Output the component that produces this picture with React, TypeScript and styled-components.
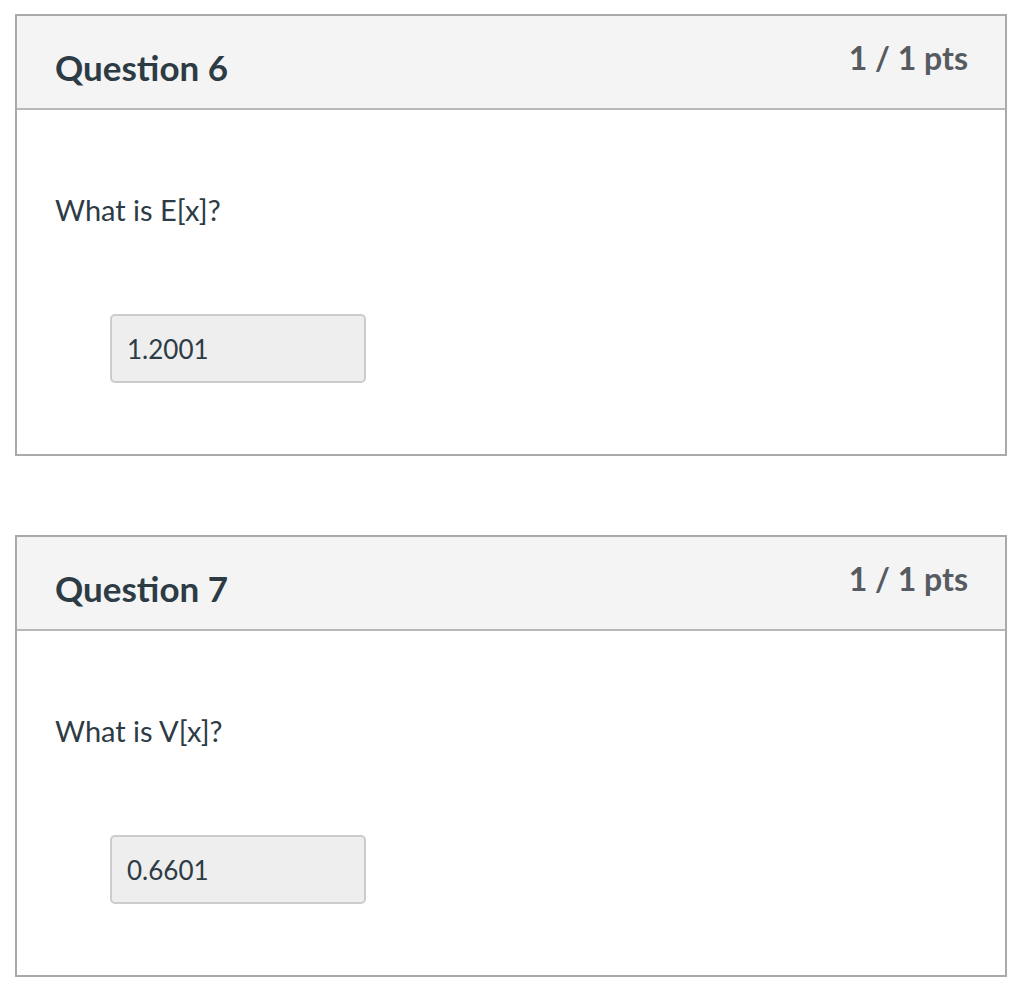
import styled, {createGlobalStyle} from "styled-components";

const GlobalStyle = createGlobalStyle`
    body {
        margin: 0;
        background: #ffffff;
        font-family: Lato, "Noto Sans", sans-serif;
    }
`

type QuestionPropsType = {
    title: string,
    points: string,
    prompt: string,
    answer: string,
}

const questions: QuestionPropsType[] = [
    {title: "Question 6", points: "1 / 1 pts", prompt: "What is E[x]?", answer: "1.2001"},
    {title: "Question 7", points: "1 / 1 pts", prompt: "What is V[x]?", answer: "0.6601"},
]

const Question = ({title, points, prompt, answer}: QuestionPropsType) => {
    return (
        <StyledCard>
            <StyledHeader>
                <StyledTitle>{title}</StyledTitle>
                <StyledPoints>{points}</StyledPoints>
            </StyledHeader>
            <StyledBody>
                <StyledPrompt>{prompt}</StyledPrompt>
                <StyledAnswer>{answer}</StyledAnswer>
            </StyledBody>
        </StyledCard>
    );
};

export default function App() {
    return (
        <>
            <GlobalStyle/>
            <StyledPage>
                {questions.map(q => <Question key={q.title} {...q}/>)}
            </StyledPage>
        </>
    );
}

const StyledPage = styled.div`
    display: flex;
    flex-direction: column;
    gap: 79px;
    padding: 14px 17px 0 15px;
`

const StyledCard = styled.div`
    display: flex;
    flex-direction: column;
    border: 2px solid #aaaaaa;
    height: 442px;
    box-sizing: border-box;
`

const StyledHeader = styled.div`
    display: flex;
    justify-content: space-between;
    align-items: flex-start;
    height: 94px;
    flex-shrink: 0;
    box-sizing: border-box;
    padding: 0 37px 0 38px;
    background: #f4f4f4;
    border-bottom: 2px solid #b8b8b8;
`

const StyledTitle = styled.h3`
    margin: 31px 0 0;
    font-size: 35px;
    font-weight: 700;
    line-height: 40px;
    color: #2d3b45;
`

const StyledPoints = styled.span`
    margin-top: 24px;
    font-size: 32px;
    font-weight: 700;
    line-height: 36px;
    color: #555b60;
`

const StyledBody = styled.div`
    display: flex;
    flex-direction: column;
    align-items: flex-start;
    padding: 82px 38px 0;
`

const StyledPrompt = styled.p`
    margin: 0;
    font-size: 29px;
    line-height: 36px;
    color: #2d3b45;
`

const StyledAnswer = styled.div`
    margin: 86px 0 0 55px;
    width: 256px;
    height: 69px;
    flex-shrink: 0;
    box-sizing: border-box;
    display: flex;
    align-items: center;
    padding: 0 15px;
    background: #eeeeee;
    border: 2px solid #cccccc;
    border-radius: 5px;
    font-size: 26px;
    color: #2d3b45;
`
